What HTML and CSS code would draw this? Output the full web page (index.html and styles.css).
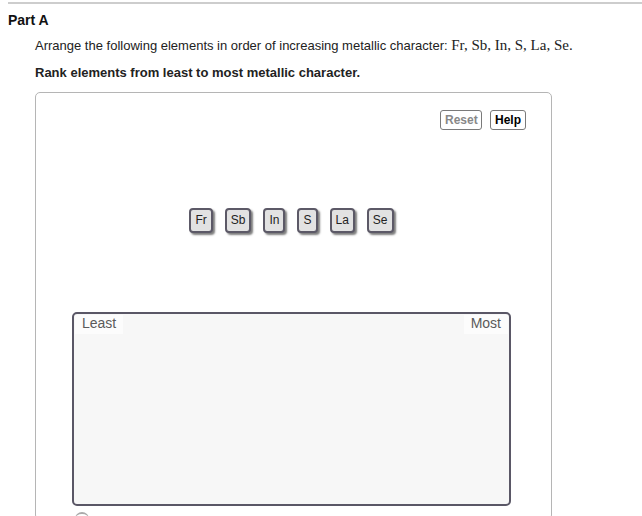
FILE: index.html
```html
<!DOCTYPE html>
<html lang="en">
  <head>
    <meta charset="UTF-8" />
    <meta name="viewport" content="width=device-width, initial-scale=1.0" />
    <link rel="stylesheet" href="styles.css">
    <title>Part A</title>
  </head>
  <body>
    <div class="part">
      <h2 class="part__title">Part A</h2>
      <p class="part__text">
        Arrange the following elements in order of increasing metallic character:
        <span class="math">Fr, Sb, In, S, La, Se.</span>
      </p>
      <p class="part__task">Rank elements from least to most metallic character.</p>

      <div class="ranking">
        <div class="ranking__tools">
          <button class="tool tool_reset">Reset</button>
          <button class="tool tool_help">Help</button>
        </div>

        <div class="tiles">
          <span class="tile">Fr</span>
          <span class="tile">Sb</span>
          <span class="tile">In</span>
          <span class="tile">S</span>
          <span class="tile">La</span>
          <span class="tile">Se</span>
        </div>

        <div class="dropzone">
          <span class="dropzone__label">Least</span>
          <span class="dropzone__label">Most</span>
        </div>

        <div class="ranking__more"></div>
      </div>
    </div>
  </body>
</html>
```

FILE: styles.css
```css
*,
*::after,
*::before {
  box-sizing: border-box;
  margin: 0;
  padding: 0;
}

html,
body {
  height: 100%;
  overflow: hidden;
}

body {
  background: #fff;
  font-family: "Liberation Sans", Arial, sans-serif;
  color: #222;
}

.part {
  margin: 2px 0 0 8px;
  border-top: 2px solid #cdcdcd;
}

.part__title {
  margin-top: 8px;
  font-size: 14px;
  line-height: 16px;
  font-weight: bold;
  color: #111;
}

.part__text {
  margin: 9px 0 0 27px;
  font-size: 13px;
  line-height: 16px;
}

.math {
  font-family: "Liberation Serif", "Times New Roman", serif;
  font-size: 15px;
}

.part__task {
  margin: 11px 0 0 27px;
  font-size: 13px;
  line-height: 16px;
  font-weight: bold;
}

.ranking {
  margin: 11px 0 0 27px;
  width: 517px;
  height: 428px;
  border: 1px solid #b5b5b5;
  border-radius: 5px;
  padding: 17px 25px 0 36px;
}

.ranking__tools {
  display: flex;
  justify-content: flex-end;
  gap: 8px;
}

.tool {
  height: 20px;
  padding: 0 4px;
  background: #fff;
  border: 1px solid #7a7a7a;
  border-radius: 3px;
  font-family: "Liberation Sans", Arial, sans-serif;
  font-size: 12px;
  font-weight: bold;
}

.tool_reset {
  width: 42px;
  color: #888;
}

.tool_help {
  width: 36px;
  color: #000;
}

.tiles {
  display: flex;
  justify-content: center;
  gap: 12px;
  margin-top: 78px;
  padding-right: 15px;
}

.tile {
  height: 25px;
  padding: 0 4px;
  line-height: 21px;
  background: #e2e2e2;
  border: 2px solid #5c5967;
  border-radius: 4px;
  box-shadow: 2px 2px 2px #7d7d7d;
  font-size: 12px;
  color: #222;
}

.dropzone {
  display: flex;
  justify-content: space-between;
  align-items: flex-start;
  width: 439px;
  height: 194px;
  margin-top: 79px;
  padding: 1px;
  background: #f7f7f7;
  border: 2px solid #5a5766;
  border-radius: 5px;
}

.dropzone__label {
  padding: 1px 7px 3px;
  background: #fcfcfc;
  font-size: 14px;
  line-height: 15px;
  color: #5a5a5a;
}

.ranking__more {
  width: 14px;
  height: 8px;
  margin: 6px 0 0 3px;
  border-top: 2px solid #aaa;
  border-radius: 7px 7px 0 0;
}
```
